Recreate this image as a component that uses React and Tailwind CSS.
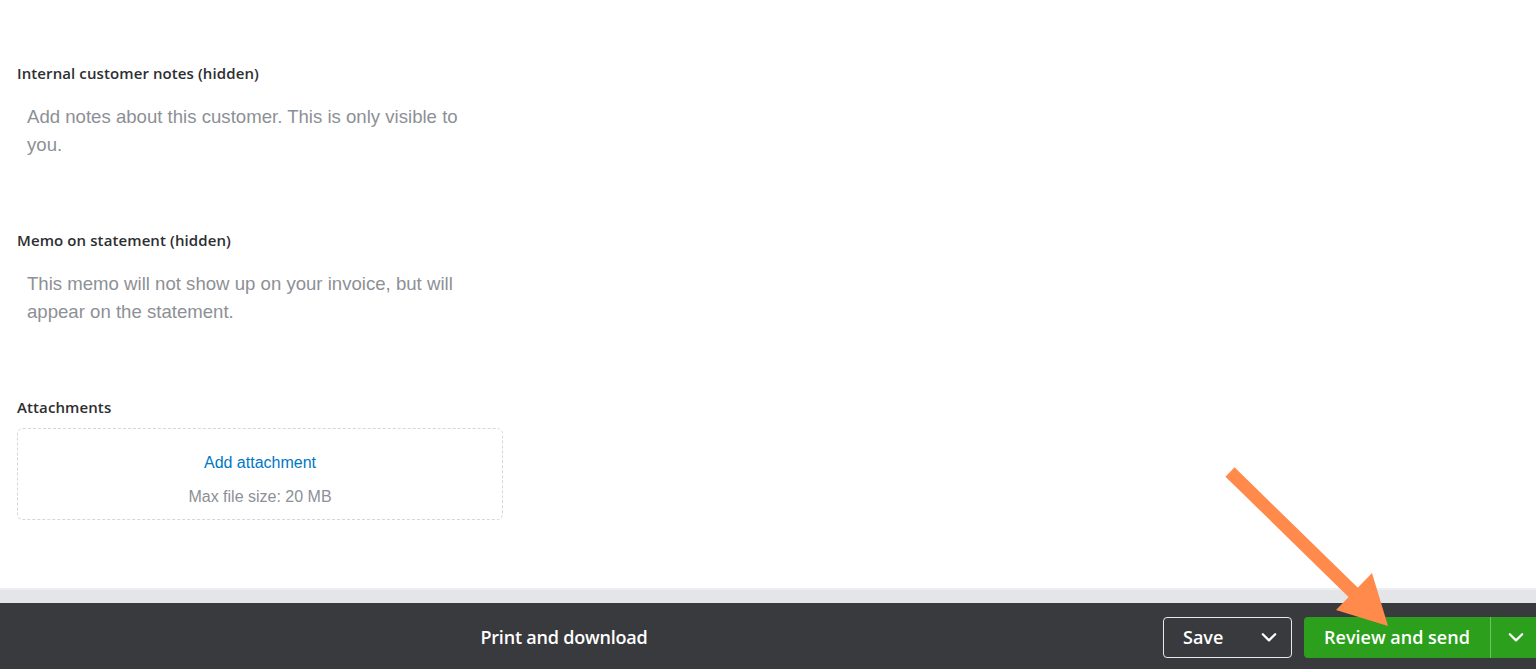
import React from "react";

const ChevronDown = ({ className }) => (
  <svg viewBox="0 0 16 16" className={className} fill="none" stroke="currentColor" strokeWidth="2" strokeLinecap="round" strokeLinejoin="round">
    <path d="M2.5 5.5l5.5 5.5 5.5-5.5" />
  </svg>
);

const Field = ({ label, text }) => (
  <div>
    <div className="h-5 text-[15px] leading-5 font-semibold tracking-[0.1px] text-[#2d2e31]">{label}</div>
    <div className="mt-5 w-[465px] pl-[10px] font-['Liberation_Sans',Arial,sans-serif] text-[18.6px] leading-[28px] text-[#8d9096]">
      {text}
    </div>
  </div>
);

const App = () => {
  return (
    <div className="relative flex h-screen flex-col overflow-hidden bg-white font-['Open_Sans',sans-serif]">
      {/* Form content */}
      <div className="flex-1 pl-[17px] pt-[63px]">
        <Field label="Internal customer notes (hidden)" text="Add notes about this customer. This is only visible to you." />
        <div className="mt-[71px]">
          <Field label="Memo on statement (hidden)" text="This memo will not show up on your invoice, but will appear on the statement." />
        </div>
        <div className="mt-[71px]">
          <div className="h-5 text-[15px] leading-5 font-semibold tracking-[0.1px] text-[#2d2e31]">Attachments</div>
          <div className="mt-[11px] flex h-[92px] w-[486px] flex-col items-center rounded-[6px] border border-dashed border-[#d4d7dc] font-['Liberation_Sans',Arial,sans-serif]">
            <div className="mt-[24px] text-[16px] leading-5 text-[#0077c5]">Add attachment</div>
            <div className="mt-[14px] text-[16px] leading-5 text-[#8d9096]">Max file size: 20 MB</div>
          </div>
        </div>
      </div>

      <div className="h-[15px] border-t-2 border-[#eceef1] bg-[#e3e5e8]" />

      {/* Footer */}
      <div className="flex h-[66px] items-center overflow-hidden bg-[#393a3d] pt-[2px] text-white">
        <div className="flex w-[1128px] shrink-0 justify-center">
          <span className="text-[18px] font-semibold tracking-[-0.2px]">Print and download</span>
        </div>
        <button className="ml-[35px] flex h-[41px] w-[129px] shrink-0 items-center justify-between rounded-[4px] border-[1.5px] border-[#e8e9ea] pl-[19px] pr-[13px]">
          <span className="text-[18px] font-semibold">Save</span>
          <ChevronDown className="h-[18px] w-[18px]" />
        </button>
        <div className="ml-[12px] flex h-[41px] w-[250px] shrink-0 items-center rounded-[4px] bg-[#2ca01c]">
          <div className="flex h-full w-[187px] items-center justify-center border-r border-[#6fc163]">
            <span className="text-[18px] font-semibold">Review and send</span>
          </div>
          <div className="flex w-[50px] justify-center">
            <ChevronDown className="h-[18px] w-[18px]" />
          </div>
        </div>
      </div>

      {/* Annotation arrow */}
      <svg className="pointer-events-none absolute left-0 top-0 h-[669px] w-[1536px]" viewBox="0 0 1536 669">
        <line x1="1230" y1="472" x2="1360" y2="599" stroke="#ff8a4c" strokeWidth="13" />
        <polygon points="1372,573 1336,610 1388,626" fill="#ff8a4c" />
      </svg>
    </div>
  );
};

export default App;
